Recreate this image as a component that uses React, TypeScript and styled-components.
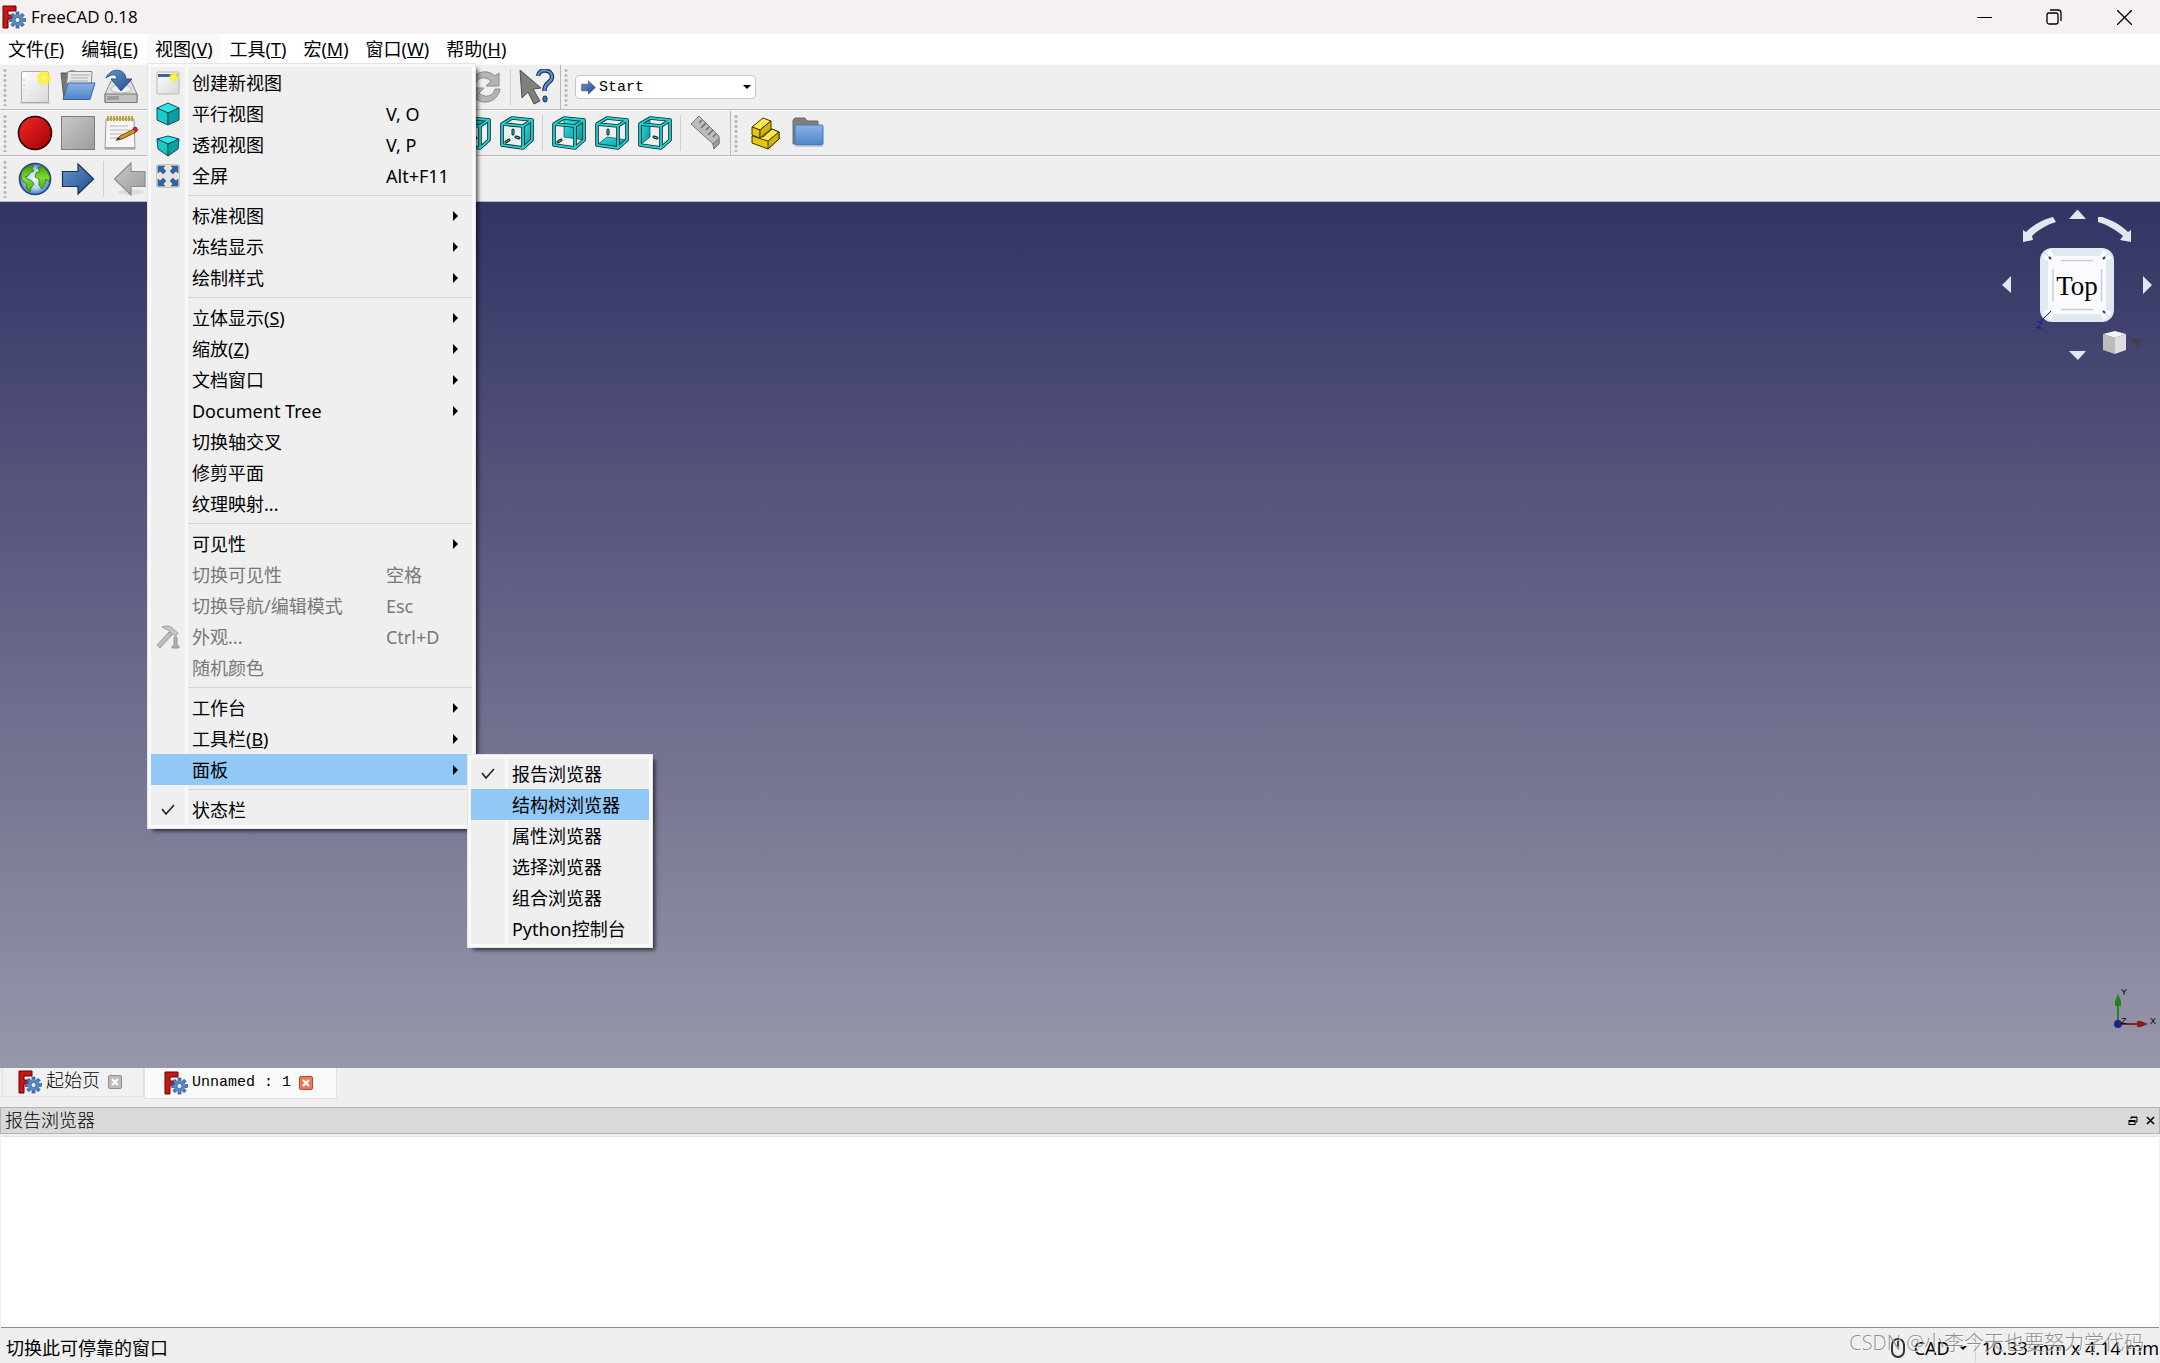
import React from "react";
import styled, { createGlobalStyle, css } from "styled-components";

const ui = `"Noto Sans", "Noto Sans CJK SC", sans-serif`;
const mono = `"Liberation Mono", "Noto Sans CJK SC", monospace`;

const GlobalStyle = createGlobalStyle`
  * { box-sizing: border-box; }
  body { margin: 0; background: #efefef; color: #000; font-family: ${ui}; font-size: 18px; line-height: 30px; }
  button { font: inherit; color: inherit; background: none; border: 0; padding: 0; margin: 0; text-align: left; }
  svg { display: block; flex: none; }
`;

const Window = styled.div`
  display: flex;
  flex-direction: column;
  min-height: 100vh;
`;

const TitleBar = styled.header`
  display: flex;
  align-items: center;
  gap: 5px;
  height: 34px;
  padding: 0 1px 0 2px;
  background: #f6f0f0;
`;
const Title = styled.h1`
  flex: 1;
  margin: 0;
  font-family: "Open Sans", sans-serif;
  font-size: 17px;
  font-weight: 400;
  line-height: 34px;
`;
const CaptionButtons = styled.div`
  display: flex;
`;
const CaptionButton = styled.button`
  display: flex;
  align-items: center;
  justify-content: center;
  width: 70px;
  height: 34px;
`;

const MenuBar = styled.nav`
  display: flex;
  gap: 1px;
  height: 30px;
  background: #fff;
`;
const MenuSlot = styled.div`
  position: relative;
`;
const MenuTitle = styled.button<{ $open?: boolean }>`
  height: 30px;
  padding: 0 8px;
  white-space: nowrap;
  background: ${(p) => (p.$open ? "#f9f9f9" : "transparent")};
`;

const popup = css`
  position: absolute;
  padding: 3px;
  border: 1px solid #e4e4e4;
  background: #f9f9f9;
  box-shadow: 4px 4px 4px -2px rgba(0, 0, 0, 0.65);
`;
const Menu = styled.div`
  ${popup}
  top: calc(100% - 1px);
  left: 0;
  z-index: 10;
  width: 329px;
`;
const SubMenu = styled.div`
  ${popup}
  top: 0;
  left: calc(100% - 5px);
  z-index: 11;
  width: 186px;
`;
const MenuBody = styled.div`
  background: linear-gradient(to right, #efefef 34px, #f9f9f9 34px 37px, #efefef 37px);
`;
const ItemWrap = styled.div`
  position: relative;
`;
const Item = styled.button<{ $hot?: boolean; $off?: boolean }>`
  display: flex;
  align-items: center;
  width: 100%;
  height: 31px;
  padding-right: 14px;
  white-space: nowrap;
  color: ${(p) => (p.$off ? "#787878" : "#000")};
  background: ${(p) => (p.$hot ? "#91c8f6" : "transparent")};
`;
const IconCell = styled.span`
  display: flex;
  justify-content: center;
  width: 34px;
  margin-right: 7px;
`;
const ItemLabel = styled.span`
  flex: 1;
`;
const Shortcut = styled.span`
  width: 72px;
`;
const Divider = styled.div`
  height: 9px;
  margin-left: 37px;
  padding-top: 4px;
  &::after {
    content: "";
    display: block;
    height: 1px;
    background: #d5d5d5;
  }
`;

const ToolRow = styled.div`
  display: flex;
  align-items: center;
  height: 46px;
  border-top: 1px solid #fafafa;
  border-bottom: 1px solid #b8b8b8;
  background: #efefef;
`;
const ToolGroup = styled.div<{ $width?: number; $edge?: boolean }>`
  display: flex;
  align-items: center;
  height: 44px;
  width: ${(p) => (p.$width ? `${p.$width}px` : "auto")};
  padding-right: 2px;
  border-right: ${(p) => (p.$edge ? "1px solid #b8b8b8" : "0")};
`;
const Handle = styled.span`
  width: 4px;
  height: 38px;
  margin: 0 6px 0 3px;
  background: radial-gradient(circle, #b5b5b5 1px, transparent 2px) 0 0 / 4px 5px;
`;
const Spacer = styled.span`
  flex: 1;
`;
const ToolButton = styled.button`
  display: flex;
  align-items: center;
  justify-content: center;
  width: 43px;
  height: 44px;
`;
const ToolDivider = styled.span`
  width: 1px;
  height: 36px;
  margin: 0 4px;
  background: #cfcfcf;
`;

const Workbench = styled.label`
  position: relative;
  display: flex;
  margin-left: 1px;
`;
const WorkbenchSelect = styled.select`
  appearance: none;
  width: 181px;
  height: 24px;
  padding: 0 20px 0 23px;
  border: 1px solid #c8c8c8;
  border-radius: 4px;
  background: #fff;
  color: #000;
  font-family: ${mono};
  font-size: 15px;
`;
const SelectIcon = styled.span<{ $end?: boolean }>`
  position: absolute;
  top: ${(p) => (p.$end ? "10px" : "5px")};
  ${(p) => (p.$end ? "right: 5px" : "left: 6px")};
  pointer-events: none;
`;

const Viewport = styled.main`
  flex: 1;
  display: flex;
  flex-direction: column;
  justify-content: space-between;
  align-items: flex-end;
  min-height: 400px;
  background: linear-gradient(#333365, #9797aa);
`;

const Tabs = styled.div`
  display: flex;
  align-items: flex-start;
  height: 39px;
  padding-left: 2px;
`;
const Tab = styled.div<{ $active?: boolean }>`
  display: flex;
  align-items: center;
  gap: 4px;
  height: ${(p) => (p.$active ? 31 : 29)}px;
  padding: ${(p) => (p.$active ? "0 23px 0 19px" : "0 21px 0 15px")};
  border: 1px solid #e2e2e2;
  border-top: 0;
  background: ${(p) => (p.$active ? "#f9f9f9" : "#f1f1f1")};
`;
const TabName = styled.button<{ $mono?: boolean }>`
  margin-right: 4px;
  font-family: ${mono};
  font-size: ${(p) => (p.$mono ? 15 : 18)}px;
  line-height: 28px;
  font-weight: 300;
  white-space: pre;
`;

const DockTitle = styled.div`
  display: flex;
  align-items: center;
  gap: 8px;
  height: 27px;
  padding: 0 4px;
  border: 1px solid #b4b4b4;
  background: #d9d9d9;
`;
const DockName = styled.label`
  flex: 1;
  font-weight: 300;
  line-height: 25px;
`;
const Report = styled.textarea`
  display: block;
  height: 192px;
  margin: 2px 1px 0 1px;
  padding: 4px;
  resize: none;
  border: 0;
  border-top: 1px solid #e2e2e2;
  border-bottom: 1px solid #8a8a8a;
  background: #fff;
`;

const StatusBar = styled.footer`
  position: relative;
  display: flex;
  align-items: center;
  height: 35px;
  padding: 5px 1px 0 6px;
  line-height: 28px;
`;
const StatusText = styled.span`
  flex: 1;
`;
const NavStyle = styled.button`
  display: flex;
  align-items: center;
  gap: 9px;
  padding-right: 8px;
  margin-right: 6px;
  border-right: 1px solid #d0d0d0;
`;
const Watermark = styled.span`
  position: absolute;
  right: 16px;
  top: 1px;
  font-family: "Open Sans", "Noto Sans CJK SC", sans-serif;
  font-size: 20px;
  font-weight: 300;
  color: rgba(110, 110, 110, 0.75);
  text-shadow: 1px 1px 0 rgba(255, 255, 255, 0.7);
`;

/* ---------- drawings ---------- */

const Defs = () => (
  <svg width="0" height="0" style={{ position: "absolute" }} aria-hidden="true">
    <defs>
      <linearGradient id="paper" x1="0" y1="0" x2="1" y2="1"><stop stopColor="#fff" /><stop offset="1" stopColor="#d8d8d8" /></linearGradient>
      <linearGradient id="blue" x1="0" y1="0" x2="0" y2="1"><stop stopColor="#8db3e2" /><stop offset="1" stopColor="#4b85ca" /></linearGradient>
      <linearGradient id="deep" x1="0" y1="0" x2="1" y2="1"><stop stopColor="#6b97cd" /><stop offset="1" stopColor="#1f4b8a" /></linearGradient>
      <linearGradient id="grey" x1="0" y1="0" x2="1" y2="1"><stop stopColor="#c9c9c9" /><stop offset="1" stopColor="#9c9c9c" /></linearGradient>
      <linearGradient id="red" x1="0" y1="0" x2="1" y2="1"><stop stopColor="#ef2929" /><stop offset="1" stopColor="#a40000" /></linearGradient>
      <linearGradient id="teal" x1="0" y1="0" x2="1" y2="1"><stop stopColor="#34e0e2" /><stop offset="1" stopColor="#06989a" /></linearGradient>
      <radialGradient id="glow"><stop stopColor="#fffbd0" /><stop offset=".35" stopColor="#fcf03a" /><stop offset=".65" stopColor="#fcee30" stopOpacity=".85" /><stop offset="1" stopColor="#fcee30" stopOpacity="0" /></radialGradient>
      <radialGradient id="sea"><stop stopColor="#f2f8ff" /><stop offset=".6" stopColor="#b5d2f0" /><stop offset="1" stopColor="#4a80c4" /></radialGradient>
      <linearGradient id="land" x1="0" y1="0" x2="0" y2="1"><stop stopColor="#3f9a12" /><stop offset=".5" stopColor="#7fdc2c" /><stop offset="1" stopColor="#4aa818" /></linearGradient>
    </defs>
  </svg>
);

const Logo = () => (
  <svg width="24" height="24" viewBox="0 0 24 24">
    <path d="M1 1h13v5H6v4h6v4H6v9H1z" fill="#cc1414" stroke="#5c0606" />
    <g transform="translate(15.500 15)">
      {[0, 45, 90, 135].map((a) => (
        <rect key={a} x="-1.500" y="-8" width="3" height="16" fill="#4a7cba" stroke="#204a87" strokeWidth=".6" transform={`rotate(${a})`} />
      ))}
      <circle r="5.500" fill="#5b8bc6" />
      <circle r="2.600" fill="#f1f1f1" stroke="#204a87" strokeWidth=".8" />
    </g>
  </svg>
);

const NewDoc = () => (
  <svg width="34" height="34" viewBox="0 0 34 34">
    <rect x="2" y="32" width="30" height="1.500" rx="1" fill="#bbb" />
    <rect x="3.500" y="1.500" width="27" height="31" rx="1.500" fill="url(#paper)" stroke="#a9a9a9" />
    <path d="M6 9v2M6 14v2M6 19v2" stroke="#c4c4c4" />
    <circle cx="26" cy="8" r="8" fill="url(#glow)" />
  </svg>
);
const OpenFolder = () => (
  <svg width="36" height="34" viewBox="0 0 36 34">
    <path d="M1 3h7l2-2h5v28H4z" fill="#777" stroke="#555" />
    <path d="M8 1.500h24l-1 18H6z" fill="#e8e8e8" stroke="#8a8a8a" />
    <path d="M11 5h18M11 8h17M10 11h18" stroke="#aaa" />
    <path d="M8 13h27l-5 16.500H3z" fill="url(#blue)" stroke="#3465a4" />
  </svg>
);
const SaveDrive = () => (
  <svg width="36" height="36" viewBox="0 0 36 36">
    <path d="M8 12h20l6 13v8H2v-8z" fill="#dedede" stroke="#888" />
    <path d="M2 25h32v8.500H2z" fill="#c3c3c3" stroke="#777" />
    <path d="M5 27v4M7 27v4M9 27v4M11 27v4M13 27v4M15 27v4" stroke="#777" />
    <ellipse cx="18" cy="20" rx="10" ry="4" fill="#f1f1f1" stroke="#bbb" />
    <path d="M3 9C7-1 22-2 23 10h6L18 22 8 10h6c0-6-6-5-11-1z" fill="url(#deep)" stroke="#2a5593" />
  </svg>
);
const Refresh = () => (
  <svg width="34" height="34" viewBox="0 0 34 34" fill="#b4b4b4" stroke="#8a8a8a">
    <path d="M2 15C4 2 19-2 27 6l4-3v13H18l5-5C16 5 9 8 7 15z" />
    <path d="M32 19c-2 13-17 17-25 9l-4 3V18h13l-5 5c7 6 14 3 16-4z" />
  </svg>
);
const WhatsThis = () => (
  <svg width="36" height="36" viewBox="0 0 36 36">
    <path d="M1 1l21 18-8 1 7 12-6 3-6-12-6 6z" fill="#7d807b" stroke="#4c4f4b" />
    <path d="M19 7C20-1 33 0 33 8c0 6-8 5-7.500 14" fill="none" stroke="#173561" strokeWidth="4.500" />
    <path d="M19 7C20-1 33 0 33 8c0 6-8 5-7.500 14" fill="none" stroke="#5f91cd" strokeWidth="2.200" />
    <rect x="24" y="27" width="4" height="6" rx="2" fill="#3c6fae" stroke="#173561" />
  </svg>
);
const Record = () => (
  <svg width="36" height="36"><circle cx="18" cy="18" r="16.500" fill="url(#red)" stroke="#2c0505" strokeWidth="1.600" /></svg>
);
const Stop = () => (
  <svg width="34" height="34"><rect x=".5" y=".5" width="33" height="33" fill="url(#grey)" stroke="#7d7d7d" /></svg>
);
const Macro = () => (
  <svg width="36" height="36" viewBox="0 0 36 36">
    <path d="M3 4h28l1 30H2z" fill="#f6f6f6" stroke="#9a9a9a" />
    <path d="M2 32h30v2H2z" fill="#aaa" />
    <path d="M5 1v5M8 1v5M11 1v5M14 1v5M17 1v5M20 1v5M23 1v5M26 1v5M29 1v5" stroke="#b9a233" strokeWidth="2" />
    <path d="M7 11h18M7 15h20M7 19h13M7 23h8" stroke="#b5b5b5" />
    <path d="M14 24l3-3 14-7 2 3-14 7z" fill="#d9912e" stroke="#704407" />
    <path d="M30 13l3-1 2 3-2 2z" fill="#e02424" stroke="#8b1a1a" strokeWidth=".8" />
    <path d="M12.500 26l2.500-4 3 2.500z" fill="#4a3418" />
  </svg>
);
const Globe = () => (
  <svg width="34" height="34" viewBox="0 0 34 34">
    <circle cx="17" cy="17" r="15.500" fill="url(#sea)" stroke="#2a3f86" strokeWidth="1.600" />
    <path d="M4 9l6-5 6-1-2 3 2 3-4 2-2 3-3 1 3 2 4 2 2 3-3 4-1 4-3-3-1-5-4-4-1-4z" fill="url(#land)" stroke="#2f7a10" strokeWidth=".8" />
    <path d="M20 5l5-1 4 5 3 6-1 5-3-3-1 5-3 5-3-4v-6l-4-2 1-4 4-2-2-2z" fill="url(#land)" stroke="#2f7a10" strokeWidth=".8" />
  </svg>
);
const Arrow = ({ back, size = 34 }: { back?: boolean; size?: number }) => (
  <svg width={size} height={size} viewBox="0 0 34 34">
    {back && <ellipse cx="18" cy="30" rx="13" ry="3" fill="#ddd" />}
    <path
      d={back ? "M1.500 17L18 1v8.500h14v15H18V33z" : "M32.500 17L17 2v7.500H1.500v15H17V32z"}
      fill={back ? "url(#grey)" : "url(#deep)"}
      stroke={back ? "#8a8a8a" : "#163057"}
      strokeWidth="1.200"
    />
  </svg>
);

type Face = "right" | "rear" | "bottom" | "left" | "top";
const faces: Record<Face, string> = {
  right: "M23 10L32 4V24L23 32z",
  rear: "M12 2L32 4V24L12 21z",
  bottom: "M2 29L12 21L32 24L23 32z",
  left: "M2 8L12 2V21L2 29z",
  top: "M2 8L12 2L32 4L23 10z",
};
const ticks: Record<Face, string> = {
  right: "M13 14v4M9 24l-3 2M16 21l3 1",
  rear: "M9 24l-3 2",
  bottom: "M13 14v4",
  left: "M16 21l3 1",
  top: "M13 14v4M9 24l-3 2M16 21l3 1",
};
const frame = "M2 8L23 10V32L2 29zM2 8L12 2L32 4L23 10M32 4V24L23 32";
const ViewCube = ({ face }: { face: Face }) => (
  <svg width="34" height="34" viewBox="0 0 34 34" fill="none" strokeLinejoin="round">
    <path d={faces[face]} fill="url(#teal)" stroke="#042a2a" strokeWidth=".6" />
    <path d={ticks[face]} stroke="#042a2a" strokeWidth="3" strokeLinecap="round" />
    <path d={ticks[face]} stroke="#22cfd1" strokeLinecap="round" />
    <path d={frame} stroke="#042a2a" strokeWidth="3.600" />
    <path d={frame} stroke="#22d3d5" strokeWidth="1.800" />
  </svg>
);
const Ruler = () => (
  <svg width="34" height="36" viewBox="0 0 34 36">
    <path d="M1 9l8-8 20 20v8l-5 5-1-5z" fill="#bcbcbc" stroke="#7c7c7c" />
    <path d="M23 29l6-6v6l-5 5z" fill="#9c9c9c" stroke="#7c7c7c" />
    <path d="M12 5l-3 3M16 8l-5 5M19 12l-3 3M23 15l-5 5M26 19l-3 3" stroke="#666" strokeWidth="1.300" />
  </svg>
);
const Part = () => (
  <svg width="32" height="34" viewBox="0 0 32 34" stroke="#3f3502" strokeLinejoin="round">
    <path d="M2 20l7-6 12-1 8 3v7L18 33 2 27z" fill="#e4c90a" />
    <path d="M2 20l16 5 11-9-7-3-9 8-6-3z" fill="#fbe84a" />
    <path d="M18 25v8l11-10v-7z" fill="#d0b508" />
    <path d="M2 11L13 2l8 3-11 9z" fill="#fbe84a" />
    <path d="M2 11l8 3v8l-8-3z" fill="#e4c90a" />
    <path d="M10 14l11-9v8l-11 9z" fill="#d0b508" />
  </svg>
);
const Folder = () => (
  <svg width="34" height="32" viewBox="0 0 34 32">
    <path d="M1 27V3l2-2h10l2 3h11v23z" fill="#7f7f7f" stroke="#6a6a6a" />
    <rect x="3" y="8" width="28" height="20" rx="1.500" fill="url(#blue)" stroke="#4277b5" />
    <path d="M2 29.500h29" stroke="#ccc" />
  </svg>
);

const NewView = () => (
  <svg width="24" height="24" viewBox="0 0 24 24">
    <rect x="1" y="1" width="22" height="22" rx="1.500" fill="url(#paper)" stroke="#b5b5b5" />
    <path d="M2 3h20v3H2z" fill="#3465a4" />
    <circle cx="18" cy="6" r="5.500" fill="url(#glow)" />
  </svg>
);
const Solid = ({ persp }: { persp?: boolean }) => (
  <svg width="24" height="24" viewBox="0 0 24 24" stroke="#0a5052" strokeLinejoin="round">
    <path d={persp ? "M1 6l11-3 11 3-11 5z" : "M1 6l11-5 11 5-11 5z"} fill="#2ee3e4" />
    <path d={persp ? "M1 6l11 5v12L2 16z" : "M1 6l11 5v12L1 18z"} fill="#18c9cb" />
    <path d={persp ? "M23 6l-11 5v12l10-7z" : "M23 6l-11 5v12l11-5z"} fill="#0b9fa1" />
  </svg>
);
const FullScreen = () => (
  <svg width="24" height="24" viewBox="0 0 24 24">
    <rect x=".5" y=".5" width="23" height="23" rx="2" fill="#e4e4e4" stroke="#c4c4c4" />
    {[0, 90, 180, 270].map((a) => (
      <path key={a} d="M2 2h7L7 4l3 3-3 3-3-3-2 2z" fill="#3465a4" stroke="#1d4178" strokeWidth=".5" transform={`rotate(${a} 12 12)`} />
    ))}
  </svg>
);
const Hammer = () => (
  <svg width="24" height="24" viewBox="0 0 24 24" stroke="#8d8d8d" strokeWidth=".8">
    <path d="M1 20L13 7l3 3L4 23z" fill="#bdbdbd" />
    <path d="M6 2c5-2 10-1 12 3l4 3-2 3-4-2-4-4C10 4 8 3 6 2z" fill="#c8c8c8" />
    <path d="M18 12h3v9h2v2h-7v-2h2z" fill="#b0b0b0" />
  </svg>
);
const Check = () => (
  <svg width="14" height="12" viewBox="0 0 14 12"><path d="M1 5l4 5 8-9" fill="none" stroke="#222" strokeWidth="1.600" /></svg>
);
const SubArrow = () => (
  <svg width="5" height="10" viewBox="0 0 5 10"><path d="M0 0l5 5-5 5z" /></svg>
);
const DownArrow = () => (
  <svg width="8" height="4" viewBox="0 0 8 4"><path d="M0 0h8L4 4z" /></svg>
);
const CloseBadge = ({ hot }: { hot?: boolean }) => (
  <svg width="14" height="14" viewBox="0 0 14 14">
    <rect x=".5" y=".5" width="13" height="13" rx="1.500" fill={hot ? "#e27f5c" : "#bcbcbc"} stroke={hot ? "#d8392b" : "#8f8f8f"} />
    <path d="M4 4l6 6M10 4l-6 6" stroke="#fff" strokeWidth="2" />
  </svg>
);

const NavCube = () => (
  <svg width="180" height="168" viewBox="0 12 180 168" role="img" aria-label="Navigation cube">
    <g fill="#e1e9f0">
      <path d="M89 29l8-9h1l8 9zM89 161h17l-8 9zM22 95l9-9v17zM163 86l9 9-9 9z" />
      <path d="M43 52v-12l3 2c7-7 16-12 27-15l3 5c-10 3-18 8-24 14l1 4zM151 52v-12l-3 2c-7-7-16-12-26-15l-4 0v5c10 3 18 8 25 14l-3 4z" />
    </g>
    <rect x="60" y="58" width="74" height="74" rx="12" fill="#e1e9f0" />
    <path d="M62 68l8-9 4 7-5 5zM132 68l-8-9-4 7 5 5zM62 122l8 9 4-7-5-5zM132 122l-8 9-4-7 5-5z" fill="#fafbfd" />
    <rect x="68" y="66" width="58" height="58" rx="5" fill="#fafbfe" />
    <path d="M81 70.500h32M81 119.500h32M73 79v21v0M73 79v32M121.500 79v32" stroke="#cbcbd8" strokeWidth="1.500" fill="none" />
    <path d="M65 63l5 5M129 63l-5 5M129 127l-5-5" stroke="#c8c8dc" />
    <path d="M69 67l2 2M125 67l-2 2M125 123l-2-2" stroke="#2a2a70" strokeWidth="2" />
    <path d="M71 121l-10 10M57 132h5l-5 6h5" stroke="#1414b0" fill="none" />
    <text x="97" y="105" textAnchor="middle" fontFamily="Liberation Serif, serif" fontSize="27">Top</text>
    <path d="M123 144l12-3 11 3-11 4z" fill="#f3f3f3" />
    <path d="M123 144l12 4v16l-12-4z" fill="#bcbcbc" />
    <path d="M146 144l-11 4v16l11-4z" fill="#dedede" />
    <path d="M150 149h15l-7 7z" fill="#40404a" />
  </svg>
);
const AxisCross = () => (
  <svg width="50" height="84" viewBox="-1 0 50 84" role="img" aria-label="Axis cross">
    <path d="M7 40V18" stroke="#1f861f" strokeWidth="2" />
    <path d="M7 10l3 7v5H4v-5z" fill="#1f861f" />
    <path d="M7 40h22" stroke="#86201f" strokeWidth="2" />
    <path d="M37 40l-7 3h-4v-6h4z" fill="#86201f" />
    <circle cx="7" cy="40" r="4" fill="#202088" />
    <g fontFamily="Liberation Sans, sans-serif" fontSize="9">
      <text x="10" y="11">Y</text>
      <text x="10" y="40">Z</text>
      <text x="39" y="40">X</text>
    </g>
  </svg>
);

/* ---------- menu data ---------- */

type Entry = {
  label: string;
  hotkey?: string;
  keys?: string;
  icon?: React.ReactNode;
  sub?: boolean;
  off?: boolean;
  hot?: boolean;
  children?: Entry[];
};

const panels: Entry[] = [
  { label: "报告浏览器", icon: <Check /> },
  { label: "结构树浏览器", hot: true },
  { label: "属性浏览器" },
  { label: "选择浏览器" },
  { label: "组合浏览器" },
  { label: "Python控制台" },
];

const viewMenu: Entry[][] = [
  [
    { label: "创建新视图", icon: <NewView /> },
    { label: "平行视图", keys: "V, O", icon: <Solid /> },
    { label: "透视视图", keys: "V, P", icon: <Solid persp /> },
    { label: "全屏", keys: "Alt+F11", icon: <FullScreen /> },
  ],
  [
    { label: "标准视图", sub: true },
    { label: "冻结显示", sub: true },
    { label: "绘制样式", sub: true },
  ],
  [
    { label: "立体显示", hotkey: "S", sub: true },
    { label: "缩放", hotkey: "Z", sub: true },
    { label: "文档窗口", sub: true },
    { label: "Document Tree", sub: true },
    { label: "切换轴交叉" },
    { label: "修剪平面" },
    { label: "纹理映射..." },
  ],
  [
    { label: "可见性", sub: true },
    { label: "切换可见性", keys: "空格", off: true },
    { label: "切换导航/编辑模式", keys: "Esc", off: true },
    { label: "外观...", keys: "Ctrl+D", icon: <Hammer />, off: true },
    { label: "随机颜色", off: true },
  ],
  [
    { label: "工作台", sub: true },
    { label: "工具栏", hotkey: "B", sub: true },
    { label: "面板", sub: true, hot: true, children: panels },
  ],
  [{ label: "状态栏", icon: <Check /> }],
];

const menus: [string, string][] = [
  ["文件", "F"], ["编辑", "E"], ["视图", "V"], ["工具", "T"], ["宏", "M"], ["窗口", "W"], ["帮助", "H"],
];

const MenuEntry = ({ e }: { e: Entry }) => (
  <ItemWrap>
    <Item role="menuitem" $hot={e.hot} $off={e.off} disabled={e.off}>
      <IconCell>{e.icon}</IconCell>
      <ItemLabel>
        {e.label}
        {e.hotkey && <>(<u>{e.hotkey}</u>)</>}
      </ItemLabel>
      {e.keys && <Shortcut>{e.keys}</Shortcut>}
      {e.sub && <SubArrow />}
    </Item>
    {e.children && (
      <SubMenu role="menu">
        <MenuBody>{e.children.map((c) => <MenuEntry key={c.label} e={c} />)}</MenuBody>
      </SubMenu>
    )}
  </ItemWrap>
);

const Tool = ({ name, children }: { name: string; children?: React.ReactNode }) => (
  <ToolButton aria-label={name}>{children}</ToolButton>
);

export default function App() {
  return (
    <Window>
      <GlobalStyle />
      <Defs />
      <TitleBar>
        <Logo />
        <Title>FreeCAD 0.18</Title>
        <CaptionButtons>
          <CaptionButton aria-label="Minimize">
            <svg width="15" height="15"><path d="M0 7.500h15" stroke="#000" /></svg>
          </CaptionButton>
          <CaptionButton aria-label="Restore">
            <svg width="16" height="16" fill="none" stroke="#000" strokeWidth="1.300">
              <rect x="1" y="4" width="11" height="11" rx="2" />
              <path d="M4 1h8q3 0 3 3v8" />
            </svg>
          </CaptionButton>
          <CaptionButton aria-label="Close">
            <svg width="15" height="15"><path d="M0 0l15 15M15 0L0 15" stroke="#000" strokeWidth="1.300" /></svg>
          </CaptionButton>
        </CaptionButtons>
      </TitleBar>

      <MenuBar>
        {menus.map(([name, key]) => (
          <MenuSlot key={key}>
            <MenuTitle $open={key === "V"}>{name}(<u>{key}</u>)</MenuTitle>
            {key === "V" && (
              <Menu role="menu">
                <MenuBody>
                  {viewMenu.map((group, i) => (
                    <React.Fragment key={i}>
                      {i > 0 && <Divider />}
                      {group.map((e) => <MenuEntry key={e.label} e={e} />)}
                    </React.Fragment>
                  ))}
                </MenuBody>
              </Menu>
            )}
          </MenuSlot>
        ))}
      </MenuBar>

      <ToolRow>
        <ToolGroup $width={561} $edge>
          <Handle />
          <Tool name="New"><NewDoc /></Tool>
          <Tool name="Open"><OpenFolder /></Tool>
          <Tool name="Save"><SaveDrive /></Tool>
          <Spacer />
          <Tool name="Refresh"><Refresh /></Tool>
          <ToolDivider />
          <Tool name="What's this?"><WhatsThis /></Tool>
        </ToolGroup>
        <ToolGroup>
          <Handle />
          <Workbench>
            <SelectIcon><Arrow size={15} /></SelectIcon>
            <WorkbenchSelect aria-label="Workbench"><option>Start</option></WorkbenchSelect>
            <SelectIcon $end><DownArrow /></SelectIcon>
          </Workbench>
        </ToolGroup>
      </ToolRow>
      <ToolRow>
        <ToolGroup $width={731} $edge>
          <Handle />
          <Tool name="Record macro"><Record /></Tool>
          <Tool name="Stop macro"><Stop /></Tool>
          <Tool name="Macros"><Macro /></Tool>
          <Spacer />
          <Tool name="Top view"><ViewCube face="top" /></Tool>
          <Tool name="Right view"><ViewCube face="right" /></Tool>
          <ToolDivider />
          <Tool name="Rear view"><ViewCube face="rear" /></Tool>
          <Tool name="Bottom view"><ViewCube face="bottom" /></Tool>
          <Tool name="Left view"><ViewCube face="left" /></Tool>
          <ToolDivider />
          <Tool name="Measure"><Ruler /></Tool>
        </ToolGroup>
        <ToolGroup>
          <Handle />
          <Tool name="Part"><Part /></Tool>
          <Tool name="Group"><Folder /></Tool>
        </ToolGroup>
      </ToolRow>
      <ToolRow>
        <Handle />
        <Tool name="Web site"><Globe /></Tool>
        <Tool name="Forward"><Arrow /></Tool>
        <ToolDivider />
        <Tool name="Back"><Arrow back /></Tool>
      </ToolRow>

      <Viewport>
        <NavCube />
        <AxisCross />
      </Viewport>

      <Tabs>
        <Tab>
          <Logo />
          <TabName>起始页</TabName>
          <button aria-label="Close tab"><CloseBadge /></button>
        </Tab>
        <Tab $active>
          <Logo />
          <TabName $mono>Unnamed : 1</TabName>
          <button aria-label="Close tab"><CloseBadge hot /></button>
        </Tab>
      </Tabs>

      <DockTitle>
        <DockName htmlFor="report">报告浏览器</DockName>
        <button aria-label="Float">
          <svg width="10" height="10" fill="none" stroke="#000"><path d="M3 3V1h6v5H7M3 1.500h6M1 5.500h6" /><rect x="1" y="4.500" width="6" height="4" /></svg>
        </button>
        <button aria-label="Close panel">
          <svg width="9" height="9"><path d="M1 1l7 7M8 1L1 8" stroke="#000" strokeWidth="1.600" /></svg>
        </button>
      </DockTitle>
      <Report id="report" readOnly />

      <StatusBar>
        <StatusText>切换此可停靠的窗口</StatusText>
        <NavStyle>
          <svg width="14" height="20" viewBox="0 0 14 20" fill="none" stroke="#2e3436" strokeWidth="2">
            <rect x="1" y="1" width="12" height="18" rx="6" />
            <path d="M7 3v6" />
          </svg>
          CAD
          <DownArrow />
        </NavStyle>
        <span>10.33 mm x 4.14 mm</span>
        <Watermark>CSDN @小李今天也要努力学代码</Watermark>
      </StatusBar>
    </Window>
  );
}
